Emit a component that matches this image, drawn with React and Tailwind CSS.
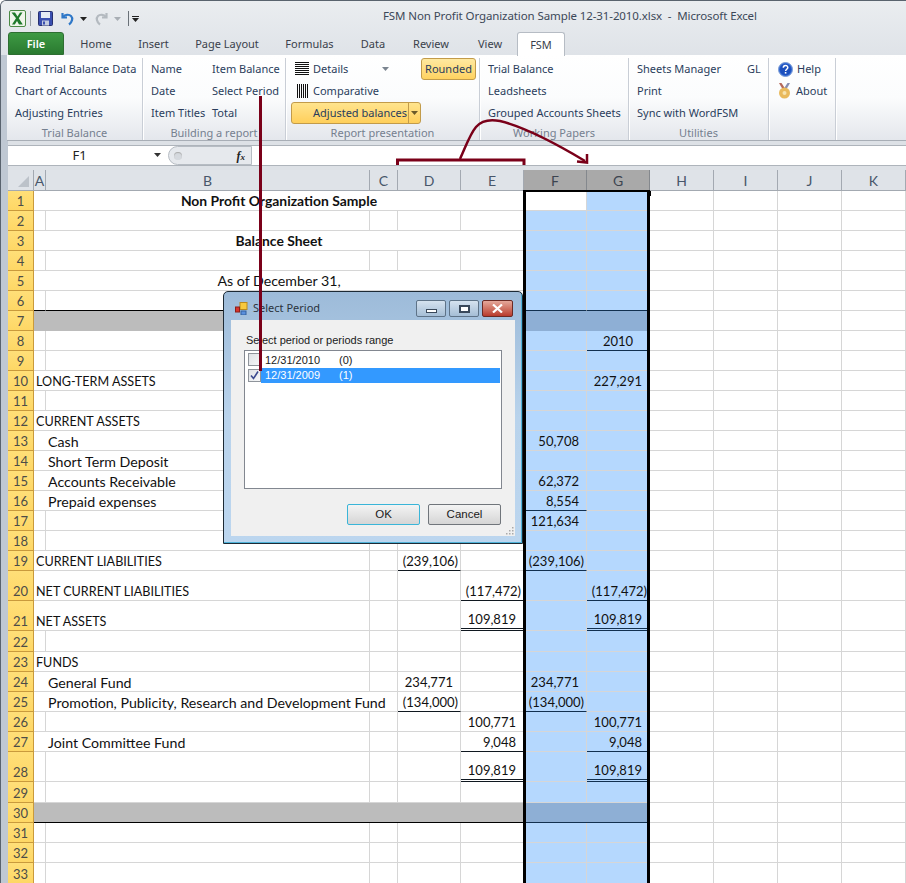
import React from 'react'
import clsx from 'clsx'

const rows = [
  {n: 1, h: 20, merge: 'Non Profit Organization Sample', bold: true, f: {white: true}},
  {n: 2, h: 20},
  {n: 3, h: 20, merge: 'Balance Sheet', bold: true},
  {n: 4, h: 20},
  {n: 5, h: 20, merge: 'As of December 31,'},
  {n: 6, h: 20, rule: true},
  {n: 7, h: 20, band: true},
  {n: 8, h: 20, g: {v: '2010', center: true, line: 'single'}},
  {n: 9, h: 20},
  {n: 10, h: 20, label: 'LONG-TERM ASSETS', caps: true, span: 2, g: {v: '227,291'}},
  {n: 11, h: 20},
  {n: 12, h: 20, label: 'CURRENT ASSETS', caps: true, span: 2},
  {n: 13, h: 20, label: 'Cash', indent: true, span: 2, f: {v: '50,708'}},
  {n: 14, h: 20, label: 'Short Term Deposit', indent: true, span: 2},
  {n: 15, h: 20, label: 'Accounts Receivable', indent: true, span: 2, f: {v: '62,372'}},
  {n: 16, h: 20, label: 'Prepaid expenses', indent: true, span: 2, f: {v: '8,554', line: 'single'}},
  {n: 17, h: 20, f: {v: '121,634'}},
  {n: 18, h: 20},
  {n: 19, h: 20, label: 'CURRENT LIABILITIES', caps: true, span: 2, d: {v: '(239,106)', neg: true, line: 'single'}, f: {v: '(239,106)', neg: true, line: 'single'}},
  {n: 20, h: 30, label: 'NET CURRENT LIABILITIES', caps: true, span: 2, e: {v: '(117,472)', neg: true, line: 'single'}, g: {v: '(117,472)', neg: true, line: 'single'}},
  {n: 21, h: 30, label: 'NET ASSETS', caps: true, span: 2, e: {v: '109,819', line: 'double'}, g: {v: '109,819', line: 'double'}},
  {n: 22, h: 21},
  {n: 23, h: 20, label: 'FUNDS', caps: true, span: 2},
  {n: 24, h: 20, label: 'General Fund', indent: true, span: 2, d: {v: '234,771'}, f: {v: '234,771'}},
  {n: 25, h: 20, label: 'Promotion, Publicity, Research and Development Fund', indent: true, span: 3, d: {v: '(134,000)', neg: true, line: 'single'}, f: {v: '(134,000)', neg: true, line: 'single'}},
  {n: 26, h: 20, e: {v: '100,771'}, g: {v: '100,771'}},
  {n: 27, h: 20, label: 'Joint Committee Fund', indent: true, span: 2, e: {v: '9,048', line: 'single'}, g: {v: '9,048', line: 'single'}},
  {n: 28, h: 30, e: {v: '109,819', line: 'double'}, g: {v: '109,819', line: 'double'}},
  {n: 29, h: 21},
  {n: 30, h: 20, band: true, rule: true},
  {n: 31, h: 20},
  {n: 32, h: 20},
  {n: 33, h: 21}
]

const columns = [
  {name: 'A', w: 'w-[12px]'},
  {name: 'B', w: 'w-[324px]'},
  {name: 'C', w: 'w-[28px]'},
  {name: 'D', w: 'w-[63px]'},
  {name: 'E', w: 'w-[63px]'},
  {name: 'F', w: 'w-[63px]', sel: true},
  {name: 'G', w: 'w-[63px]', sel: true},
  {name: 'H', w: 'w-[64px]'},
  {name: 'I', w: 'w-[64px]'},
  {name: 'J', w: 'w-[64px]'},
  {name: 'K', w: 'w-[64px]'}
]

const tabs = [
  {name: 'Home', w: 'w-[58px]'},
  {name: 'Insert', w: 'w-[57px]'},
  {name: 'Page Layout', w: 'w-[90px]'},
  {name: 'Formulas', w: 'w-[75px]'},
  {name: 'Data', w: 'w-[52px]'},
  {name: 'Review', w: 'w-[64px]'},
  {name: 'View', w: 'w-[54px]'}
]

const sheetGrid = 'grid grid-cols-[26px_12px_324px_28px_63px_63px_63px_63px_64px_64px_64px_64px]'

const ExcelLogo = () => (
  <svg width="17" height="17" viewBox="0 0 17 17">
    <rect x="0.5" y="0.5" width="16" height="16" rx="1.5" fill="#eef5ea" stroke="#4b8a45" />
    <path d="M2.500 2.500h3.500l2.500 4 2.500-4h2.500L9.800 8.300l4 6.200H10L8 11l-2.200 3.500H3L7 8.300z" fill="#1f7a2c" />
  </svg>
)

const SaveIcon = () => (
  <svg width="15" height="15" viewBox="0 0 15 15">
    <rect x="0.5" y="0.5" width="14" height="14" rx="1" fill="#3a4fb0" stroke="#27306f" />
    <rect x="3" y="1" width="9" height="6" fill="#e6ebf5" />
    <rect x="4" y="9.500" width="7" height="5" fill="#c3cce0" />
    <rect x="5" y="10.500" width="2" height="3" fill="#3a4fb0" />
  </svg>
)

const UndoIcon = ({color}) => (
  <svg width="13" height="14" viewBox="0 0 13 14" fill="none" stroke={color} strokeWidth="2.200">
    <path d="M1.500 1v4.500H6" />
    <path d="M2 5c2-2.500 6-3 8-1 2 2 1.500 6-2 8.500" />
  </svg>
)

const RedoIcon = () => (
  <svg width="13" height="14" viewBox="0 0 13 14" fill="none" stroke="#b4bac0" strokeWidth="2.200">
    <path d="M11.500 1v4.500H7" />
    <path d="M11 5C9 2.500 5 2 3 4c-2 2-1.500 6 2 8.500" />
  </svg>
)

const Caret = ({color = '#222', className}) => (
  <svg width="7" height="4" viewBox="0 0 7 4" className={className}>
    <path d="M0 0h7L3.500 4z" fill={color} />
  </svg>
)

const RowsIcon = () => (
  <svg width="14" height="14" viewBox="0 0 14 14" stroke="#111">
    {[0.5, 2.5, 4.5, 6.5, 8.5, 10.5, 12.5].map(y => (
      <path key={y} d={`M0 ${y}h14`} />
    ))}
  </svg>
)

const ColsIcon = () => (
  <svg width="12" height="14" viewBox="0 0 12 14" stroke="#111">
    {[0.5, 2.5, 4.5, 6.5, 8.5, 10.5].map(x => (
      <path key={x} d={`M${x} 0v14`} />
    ))}
  </svg>
)

const HelpIcon = () => (
  <svg width="15" height="15" viewBox="0 0 15 15">
    <circle cx="7.500" cy="7.500" r="7" fill="#2f66d0" stroke="#7f9ed6" />
    <circle cx="7.500" cy="7.500" r="5.500" fill="#1c4fbd" />
    <path d="M5.300 5.800c0-3 4.500-3 4.500-.3 0 1.700-2.200 1.800-2.200 3.500" fill="none" stroke="#fff" strokeWidth="1.500" />
    <rect x="6.800" y="10" width="1.600" height="1.600" fill="#fff" />
  </svg>
)

const MedalIcon = () => (
  <svg width="13" height="16" viewBox="0 0 13 16">
    <path d="M1 0l4 7h3L3.500 0z" fill="#b76a5a" />
    <path d="M12 0L8 7H5l4.500-7z" fill="#8a8fb0" />
    <circle cx="6.500" cy="10" r="5.500" fill="#e9b95b" />
    <circle cx="6.500" cy="10" r="2" fill="#f7e3ae" />
  </svg>
)

const DialogLogo = () => (
  <svg width="13" height="13" viewBox="0 0 13 13">
    <rect x="5" y="0.500" width="7" height="7" fill="#f7c93e" stroke="#b98a1e" />
    <rect x="0.500" y="5" width="4" height="5" fill="#d8342a" stroke="#8c1f18" />
    <rect x="6" y="9" width="5" height="4" fill="#5a8fdc" stroke="#32619f" />
  </svg>
)

const RibbonItem = ({children, className}) => (
  <div className={clsx('flex h-[22px] items-center whitespace-nowrap', className)}>{children}</div>
)

const Group = ({label, w, children, className}) => (
  <div className={clsx('flex shrink-0 flex-col border-r border-[#c9ced6] shadow-[1px_0_0_#fff]', w)}>
    <div className={clsx('h-[66px]', className)}>{children}</div>
    <div className="flex h-[20px] items-center justify-center pt-px text-[#75808f]">{label}</div>
  </div>
)

const Ribbon = () => (
  <div className="ml-[6px] flex h-[86px] border-b border-[#a8aeb6] bg-gradient-to-b from-white via-[#fbfcfd] to-[#e4e7ec] pt-[3px] text-[11px] text-[#2a3d5c]">
    <Group label="Trial Balance" w="w-[136px]" className="pl-[8px]">
      <RibbonItem>Read Trial Balance Data</RibbonItem>
      <RibbonItem>Chart of Accounts</RibbonItem>
      <RibbonItem>Adjusting Entries</RibbonItem>
    </Group>
    <Group label="Building a report" w="w-[143px]" className="grid grid-cols-[61px_1fr] pl-[8px]">
      <RibbonItem>Name</RibbonItem>
      <RibbonItem>Item Balance</RibbonItem>
      <RibbonItem>Date</RibbonItem>
      <RibbonItem>Select Period</RibbonItem>
      <RibbonItem>Item Titles</RibbonItem>
      <RibbonItem>Total</RibbonItem>
    </Group>
    <Group label="Report presentation" w="w-[194px]" className="flex pl-[5px]">
      <div className="w-[130px]">
        <RibbonItem className="pl-[4px]">
          <RowsIcon />
          <span className="ml-[4px]">Details</span>
          <Caret color="#7b8590" className="ml-[34px]" />
        </RibbonItem>
        <RibbonItem className="pl-[6px]">
          <ColsIcon />
          <span className="ml-[4px]">Comparative</span>
        </RibbonItem>
        <div className="flex h-[22px] rounded-[3px] border border-[#c29b4a] bg-gradient-to-b from-[#ffe48d] to-[#ffcf5a]">
          <span className="flex-1 pl-[21px] leading-[20px] whitespace-nowrap">Adjusted balances</span>
          <span className="flex w-[12px] items-center justify-center border-l border-[#c29b4a]">
            <Caret color="#6b5a2a" />
          </span>
        </div>
      </div>
      <div className="flex h-[22px] w-[55px] items-center justify-center rounded-[3px] border border-[#c29b4a] bg-gradient-to-b from-[#ffe9a0] to-[#ffd25f]">
        Rounded
      </div>
    </Group>
    <Group label="Working Papers" w="w-[149px]" className="pl-[8px]">
      <RibbonItem>Trial Balance</RibbonItem>
      <RibbonItem>Leadsheets</RibbonItem>
      <RibbonItem>Grouped Accounts Sheets</RibbonItem>
    </Group>
    <Group label="Utilities" w="w-[140px]" className="pl-[8px]">
      <RibbonItem>
        <span className="w-[110px]">Sheets Manager</span>
        <span>GL</span>
      </RibbonItem>
      <RibbonItem>Print</RibbonItem>
      <RibbonItem>Sync with WordFSM</RibbonItem>
    </Group>
    <Group label="" w="w-[67px]" className="pl-[9px]">
      <RibbonItem>
        <HelpIcon />
        <span className="ml-[4px]">Help</span>
      </RibbonItem>
      <RibbonItem>
        <MedalIcon />
        <span className="ml-[5px]">About</span>
      </RibbonItem>
    </Group>
  </div>
)

const FormulaBar = () => (
  <div className="ml-[7px] h-[29px] bg-[#dde1e6] pt-[4px]">
    <div className="flex h-[21px] border-y border-[#aeb4bb] bg-white text-[13px] text-[#222]">
      <div className="relative flex w-[160px] items-center justify-center pt-px">
        <span className="mr-[17px]">F1</span>
        <Caret color="#333" className="absolute right-[7px] top-[7px]" />
      </div>
      <div className="flex w-[84px] items-center justify-between rounded-l-full border border-[#b6bcc3] bg-[#e6e9ed] pl-[5px] pr-[6px]">
        <span className="h-[8px] w-[8px] rounded-full bg-[#d5d9de] shadow-[inset_0_1px_1px_#aaa]" />
        <span className="font-['Liberation_Serif',serif] text-[12px] font-bold italic">
          f<span className="text-[9px]">x</span>
        </span>
      </div>
      <div className="flex-1" />
    </div>
  </div>
)

const ColumnHeader = () => (
  <div className="flex h-[21px] text-[14px] text-[#48566a]">
    <div className="relative w-[26px] border-r border-b border-[#a3a9b1] bg-[#dfe3e8]">
      <svg width="11" height="11" viewBox="0 0 11 11" className="absolute right-[4px] bottom-[3px]">
        <path d="M11 0v11H0z" fill="#bcc2c9" />
      </svg>
    </div>
    {columns.map(c => (
      <div
        key={c.name}
        className={clsx(
          'flex items-center justify-center border-r border-b border-[#a3a9b1] pt-px',
          c.w,
          c.sel ? 'border-r-[#84888d] bg-[#a9a9a9] text-[#3c4450]' : 'bg-[#dfe3e8]'
        )}>
        {c.name}
      </div>
    ))}
  </div>
)

const Cell = ({v, neg, center, line, sel, white}) => (
  <div
    className={clsx(
      'flex items-end overflow-visible border-r border-b border-r-[#d6d6d6] text-[13px] leading-[17px] whitespace-nowrap',
      center ? 'justify-center' : 'justify-end',
      !center && (neg ? 'pr-[2px]' : 'pr-[7px]'),
      sel && !white && 'bg-[#b5d8fe]',
      !line && 'border-b-[#d6d6d6]',
      line === 'single' && (sel ? 'border-b-[#12304f]' : 'border-b-[#101820]'),
      line === 'double' && 'border-b-[3px] border-double',
      line === 'double' && (sel ? 'border-b-[#12304f]' : 'border-b-[#101820]')
    )}>
    {v}
  </div>
)

const SheetRow = ({row}) => {
  const edge = row.rule ? 'border-b-black' : 'border-b-[#d6d6d6]'
  const ruleLine = line => (row.rule ? 'single' : line)
  return (
    <div className={clsx(sheetGrid, 'text-[14.2px] leading-[19px] text-[#111]')} style={{height: row.h}}>
      <div className="flex items-end justify-center border-r border-b border-[#c99a3c] bg-gradient-to-b from-[#ffdf78] to-[#fed765] text-[13px] leading-[17px] text-[#4c4c48]">
        {row.n}
      </div>
      {row.band ? (
        <>
          <div className={clsx('col-span-5 border-b bg-[#bcbcbc]', row.rule ? 'border-b-black' : 'border-b-[#bcbcbc]')} />
          <div className={clsx('col-span-2 border-b bg-[#8eafd5]', row.rule ? 'border-b-[#12304f]' : 'border-b-[#8eafd5]')} />
        </>
      ) : (
        <>
          {row.merge && (
            <div className={clsx('col-span-5 flex items-end justify-center border-b border-b-[#d6d6d6]', row.bold && 'text-[13.9px] font-bold')}>
              {row.merge}
            </div>
          )}
          {row.label && (
            <div
              className={clsx(
                'flex items-end border-r border-b border-r-[#d6d6d6] border-b-[#d6d6d6] leading-[17px]',
                row.span === 3 ? 'col-span-3' : 'col-span-2'
              )}>
              <span className={clsx('whitespace-nowrap', row.indent ? 'pl-[14px]' : 'pl-[2px]', row.caps && 'text-[12.6px]')}>
                {row.label}
              </span>
            </div>
          )}
          {!row.merge && !row.label && (
            <>
              <div className={clsx('border-r border-b border-r-[#d6d6d6]', edge)} />
              <div className={clsx('border-r border-b border-r-[#d6d6d6]', edge)} />
            </>
          )}
          {!row.merge && row.span !== 3 && <div className={clsx('border-r border-b border-r-[#d6d6d6]', edge)} />}
          {!row.merge && <Cell {...row.d} line={ruleLine(row.d?.line)} />}
          {!row.merge && <Cell {...row.e} line={ruleLine(row.e?.line)} />}
          <Cell {...row.f} sel line={ruleLine(row.f?.line)} />
          <Cell {...row.g} sel line={ruleLine(row.g?.line)} />
        </>
      )}
      <Cell />
      <Cell />
      <Cell />
      <Cell />
    </div>
  )
}

const ListRow = ({date, idx, checked, active}) => (
  <div className="flex h-[15.500px] items-center pl-[3px]">
    <span className="flex h-[13px] w-[13px] items-center justify-center border border-[#8f949b] bg-gradient-to-br from-[#dfe2e6] to-[#f6f7f8]">
      {checked && (
        <svg width="9" height="9" viewBox="0 0 9 9" fill="none" stroke="#3b4a8f" strokeWidth="1.600">
          <path d="M1 4.500l2.500 3L8 0.500" />
        </svg>
      )}
    </span>
    <span className={clsx('flex h-full w-[239px] items-center pl-[4px]', active && 'bg-[#3399ff] text-white')}>
      <span className="w-[74px]">{date}</span>
      <span>{idx}</span>
    </span>
  </div>
)

const WinButton = ({children, className}) => (
  <div className={clsx('flex h-[17px] items-center justify-center rounded-[2px] border border-[#5e7388]', className)}>
    {children}
  </div>
)

const Dialog = () => (
  <div className="absolute top-[290px] left-[222px] flex h-[253px] w-[300px] flex-col rounded-t-[5px] border border-[#1d2a35] bg-gradient-to-b from-[#9dbbd9] via-[#b9d3ec] to-[#bcd6ef] px-[7px] pb-[7px] font-['Liberation_Sans',sans-serif] text-[11px] text-[#1a1a1a] shadow-[inset_-1px_-1px_0_#4fb3d9]">
    <div className="flex h-[28px] shrink-0 items-center pt-[5px]">
      <span className="ml-[4px] flex">
        <DialogLogo />
      </span>
      <span className="ml-[5px] font-['Noto_Sans',sans-serif] text-[11px] text-[#2b3440]">Select Period</span>
      <div className="ml-auto flex gap-[3px] pr-[2px]">
        <WinButton className="w-[30px] bg-gradient-to-b from-[#d5e2ef] to-[#a5bed6]">
          <span className="mt-[4px] h-[4px] w-[11px] border border-[#39485a] bg-white" />
        </WinButton>
        <WinButton className="w-[30px] bg-gradient-to-b from-[#d5e2ef] to-[#a5bed6]">
          <span className="h-[8px] w-[11px] border-2 border-[#39485a] bg-white" />
        </WinButton>
        <WinButton className="w-[31px] border-[#6b2a24] bg-gradient-to-b from-[#e4a89b] to-[#b8392b]">
          <svg width="11" height="9" viewBox="0 0 11 9" fill="none" stroke="#fff" strokeWidth="2.200">
            <path d="M1 0.500l9 8M10 0.500l-9 8" />
          </svg>
        </WinButton>
      </div>
    </div>
    <div className="relative flex-1 bg-[#f0f0f0] px-[13px] pt-[12px]">
      <div className="h-[18px] pl-[2px] leading-[16px]">Select period or periods range</div>
      <div className="h-[139px] w-[258px] border border-[#828790] bg-white pt-[1px]">
        <ListRow date="12/31/2010" idx="(0)" />
        <ListRow date="12/31/2009" idx="(1)" checked active />
      </div>
      <div className="mt-[15px] flex justify-end gap-[8px] pr-[1px] text-[11.5px]">
        <div className="flex h-[21px] w-[73px] items-center justify-center rounded-[2px] border border-[#3ab5d8] bg-gradient-to-b from-[#f4f4f4] to-[#d5d5d5]">
          OK
        </div>
        <div className="flex h-[21px] w-[73px] items-center justify-center rounded-[2px] border border-[#70757b] bg-gradient-to-b from-[#f4f4f4] to-[#d5d5d5]">
          Cancel
        </div>
      </div>
      <svg width="8" height="8" viewBox="0 0 8 8" fill="#a9a9a9" className="absolute right-[1px] bottom-[1px]">
        <rect x="6" y="0" width="1.500" height="1.500" />
        <rect x="3" y="3" width="1.500" height="1.500" />
        <rect x="6" y="3" width="1.500" height="1.500" />
        <rect x="0" y="6" width="1.500" height="1.500" />
        <rect x="3" y="6" width="1.500" height="1.500" />
        <rect x="6" y="6" width="1.500" height="1.500" />
      </svg>
    </div>
  </div>
)

const Annotations = () => (
  <svg width="906" height="883" viewBox="0 0 906 883" fill="none" stroke="#7a0019" className="pointer-events-none absolute top-[-1px] left-[-1px]">
    <path d="M260.500 96V371" strokeWidth="3" />
    <path d="M397.500 165V160H524V165" strokeWidth="3" />
    <path d="M460 159C466 146 470 134 476 127C482 120 490 119 500 121C520 126 550 140 585 161" strokeWidth="2.500" />
    <path d="M587 154L587 162.500L577 161.500" strokeWidth="2.500" />
  </svg>
)

export default function App() {
  return (
    <div className="relative h-[883px] w-[906px] overflow-hidden rounded-tl-[6px] border-t border-l border-[#59636e] bg-[#bfc8d3] font-['Noto_Sans',sans-serif]">
      <div className="bg-gradient-to-b from-[#eaedf0] to-[#dfe3e8]">
        <div className="flex h-[29px] items-center pl-[8px]">
          <span className="mt-[6px] flex items-center">
            <ExcelLogo />
            <span className="ml-[4px] h-[15px] w-px bg-[#9aa1a9]" />
            <span className="ml-[7px] flex">
              <SaveIcon />
            </span>
            <span className="ml-[8px] flex">
              <UndoIcon color="#2f78c8" />
            </span>
            <Caret className="ml-[6px]" />
            <span className="ml-[8px] flex">
              <RedoIcon />
            </span>
            <Caret color="#a8aeb4" className="ml-[6px]" />
            <span className="ml-[7px] h-[15px] w-px bg-[#6a7178]" />
            <span className="ml-[3px] flex flex-col items-center gap-[1px]">
              <span className="h-px w-[7px] bg-[#222]" />
              <Caret />
            </span>
          </span>
          <span className="ml-[244px] text-[11.5px] tracking-[-0.1px] whitespace-nowrap text-[#3c4858]">
            FSM Non Profit Organization Sample 12-31-2010.xlsx&nbsp; -&nbsp; Microsoft Excel
          </span>
        </div>
        <div className="flex h-[25px] items-end pl-[7px] text-[11px] text-[#3a3f4b]">
          <div className="flex h-[23px] w-[56px] items-center justify-center rounded-t-[3px] border border-[#2e6e32] bg-gradient-to-b from-[#3e9a44] to-[#2a7a30] pt-[2px] font-semibold text-white">
            File
          </div>
          <div className="w-[3px]" />
          {tabs.map(t => (
            <div key={t.name} className={clsx('flex h-[23px] items-center justify-center pt-[2px]', t.w)}>
              {t.name}
            </div>
          ))}
          <div className="relative top-px flex h-[24px] w-[48px] items-center justify-center rounded-t-[3px] border border-b-0 border-[#b6bcc4] bg-white pt-[2px]">
            FSM
          </div>
        </div>
      </div>
      <Ribbon />
      <FormulaBar />
      <div className="relative ml-[7px] bg-white font-['Lato',sans-serif]">
        <ColumnHeader />
        <div>
          {rows.map(r => (
            <SheetRow key={r.n} row={r} />
          ))}
        </div>
        <div className="pointer-events-none absolute top-[20px] bottom-0 left-[515px] w-[127px] border-x-[3px] border-t-2 border-black" />
        <div className="absolute top-[21px] left-[639px] h-[5px] w-[4px] bg-black" />
      </div>
      <Dialog />
      <Annotations />
    </div>
  )
}
